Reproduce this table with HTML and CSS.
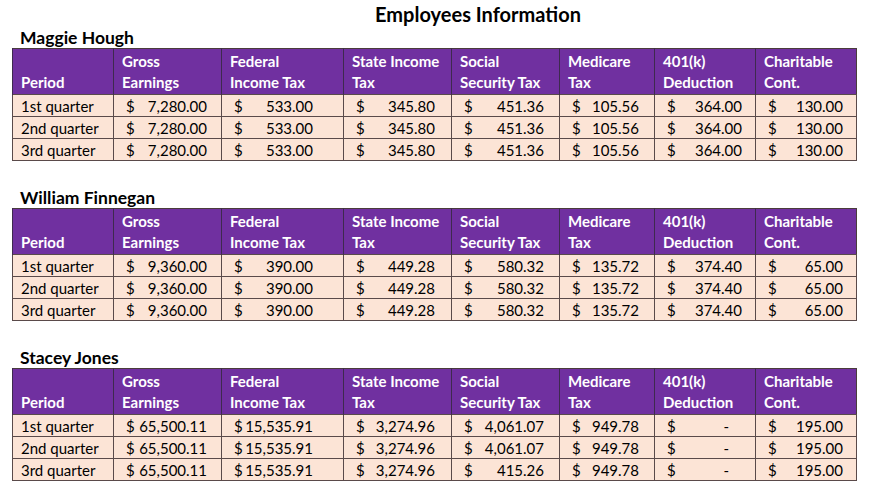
FILE: index.html
```html
<!DOCTYPE html>
<html>
<head>
<meta charset="utf-8">
<link rel="stylesheet" href="styles.css">
</head>
<body>
<div class="page">
  <h1 class="title">Employees Information</h1>

  <section class="emp">
    <h2 class="name">Maggie Hough</h2>
    <table class="grid">
      <colgroup>
        <col class="c1"><col class="c2"><col class="c3"><col class="c4"><col class="c5"><col class="c6"><col class="c7"><col class="c8">
      </colgroup>
      <thead>
        <tr><th>Period</th><th>Gross<br>Earnings</th><th>Federal<br>Income Tax</th><th>State Income<br>Tax</th><th>Social<br>Security Tax</th><th>Medicare<br>Tax</th><th>401(k)<br>Deduction</th><th>Charitable<br>Cont.</th></tr>
      </thead>
      <tbody>
        <tr><td class="per">1st quarter</td><td class="amt p-gross"><span>$</span><span>7,280.00</span></td><td class="amt p-fed"><span>$</span><span>533.00</span></td><td class="amt p-state"><span>$</span><span>345.80</span></td><td class="amt p-soc"><span>$</span><span>451.36</span></td><td class="amt p-med"><span>$</span><span>105.56</span></td><td class="amt p-401"><span>$</span><span>364.00</span></td><td class="amt p-char"><span>$</span><span>130.00</span></td></tr>
        <tr><td class="per">2nd quarter</td><td class="amt p-gross"><span>$</span><span>7,280.00</span></td><td class="amt p-fed"><span>$</span><span>533.00</span></td><td class="amt p-state"><span>$</span><span>345.80</span></td><td class="amt p-soc"><span>$</span><span>451.36</span></td><td class="amt p-med"><span>$</span><span>105.56</span></td><td class="amt p-401"><span>$</span><span>364.00</span></td><td class="amt p-char"><span>$</span><span>130.00</span></td></tr>
        <tr><td class="per">3rd quarter</td><td class="amt p-gross"><span>$</span><span>7,280.00</span></td><td class="amt p-fed"><span>$</span><span>533.00</span></td><td class="amt p-state"><span>$</span><span>345.80</span></td><td class="amt p-soc"><span>$</span><span>451.36</span></td><td class="amt p-med"><span>$</span><span>105.56</span></td><td class="amt p-401"><span>$</span><span>364.00</span></td><td class="amt p-char"><span>$</span><span>130.00</span></td></tr>
      </tbody>
    </table>
  </section>

  <section class="emp">
    <h2 class="name">William Finnegan</h2>
    <table class="grid">
      <colgroup>
        <col class="c1"><col class="c2"><col class="c3"><col class="c4"><col class="c5"><col class="c6"><col class="c7"><col class="c8">
      </colgroup>
      <thead>
        <tr><th>Period</th><th>Gross<br>Earnings</th><th>Federal<br>Income Tax</th><th>State Income<br>Tax</th><th>Social<br>Security Tax</th><th>Medicare<br>Tax</th><th>401(k)<br>Deduction</th><th>Charitable<br>Cont.</th></tr>
      </thead>
      <tbody>
        <tr><td class="per">1st quarter</td><td class="amt p-gross"><span>$</span><span>9,360.00</span></td><td class="amt p-fed"><span>$</span><span>390.00</span></td><td class="amt p-state"><span>$</span><span>449.28</span></td><td class="amt p-soc"><span>$</span><span>580.32</span></td><td class="amt p-med"><span>$</span><span>135.72</span></td><td class="amt p-401"><span>$</span><span>374.40</span></td><td class="amt p-char"><span>$</span><span>65.00</span></td></tr>
        <tr><td class="per">2nd quarter</td><td class="amt p-gross"><span>$</span><span>9,360.00</span></td><td class="amt p-fed"><span>$</span><span>390.00</span></td><td class="amt p-state"><span>$</span><span>449.28</span></td><td class="amt p-soc"><span>$</span><span>580.32</span></td><td class="amt p-med"><span>$</span><span>135.72</span></td><td class="amt p-401"><span>$</span><span>374.40</span></td><td class="amt p-char"><span>$</span><span>65.00</span></td></tr>
        <tr><td class="per">3rd quarter</td><td class="amt p-gross"><span>$</span><span>9,360.00</span></td><td class="amt p-fed"><span>$</span><span>390.00</span></td><td class="amt p-state"><span>$</span><span>449.28</span></td><td class="amt p-soc"><span>$</span><span>580.32</span></td><td class="amt p-med"><span>$</span><span>135.72</span></td><td class="amt p-401"><span>$</span><span>374.40</span></td><td class="amt p-char"><span>$</span><span>65.00</span></td></tr>
      </tbody>
    </table>
  </section>

  <section class="emp">
    <h2 class="name">Stacey Jones</h2>
    <table class="grid">
      <colgroup>
        <col class="c1"><col class="c2"><col class="c3"><col class="c4"><col class="c5"><col class="c6"><col class="c7"><col class="c8">
      </colgroup>
      <thead>
        <tr><th>Period</th><th>Gross<br>Earnings</th><th>Federal<br>Income Tax</th><th>State Income<br>Tax</th><th>Social<br>Security Tax</th><th>Medicare<br>Tax</th><th>401(k)<br>Deduction</th><th>Charitable<br>Cont.</th></tr>
      </thead>
      <tbody>
        <tr><td class="per">1st quarter</td><td class="amt p-gross"><span>$</span><span>65,500.11</span></td><td class="amt p-fed"><span>$</span><span>15,535.91</span></td><td class="amt p-state"><span>$</span><span>3,274.96</span></td><td class="amt p-soc"><span>$</span><span>4,061.07</span></td><td class="amt p-med"><span>$</span><span>949.78</span></td><td class="amt p-401 dash"><span>$</span><span>-</span></td><td class="amt p-char"><span>$</span><span>195.00</span></td></tr>
        <tr><td class="per">2nd quarter</td><td class="amt p-gross"><span>$</span><span>65,500.11</span></td><td class="amt p-fed"><span>$</span><span>15,535.91</span></td><td class="amt p-state"><span>$</span><span>3,274.96</span></td><td class="amt p-soc"><span>$</span><span>4,061.07</span></td><td class="amt p-med"><span>$</span><span>949.78</span></td><td class="amt p-401 dash"><span>$</span><span>-</span></td><td class="amt p-char"><span>$</span><span>195.00</span></td></tr>
        <tr><td class="per">3rd quarter</td><td class="amt p-gross"><span>$</span><span>65,500.11</span></td><td class="amt p-fed"><span>$</span><span>15,535.91</span></td><td class="amt p-state"><span>$</span><span>3,274.96</span></td><td class="amt p-soc"><span>$</span><span>415.26</span></td><td class="amt p-med"><span>$</span><span>949.78</span></td><td class="amt p-401 dash"><span>$</span><span>-</span></td><td class="amt p-char"><span>$</span><span>195.00</span></td></tr>
      </tbody>
    </table>
  </section>
</div>
</body>
</html>
```

FILE: styles.css
```css
* { box-sizing: border-box; }

html, body {
  margin: 0;
  padding: 0;
  background: #ffffff;
}

body {
  font-family: Lato, "Liberation Sans", sans-serif;
  color: #000000;
}

.page {
  width: 876px;
  padding: 0 0 0 12px;
}

.title {
  margin: 0;
  width: 844px;
  padding: 3px 0 0 88px;
  height: 28px;
  font-size: 20px;
  font-weight: 700;
  line-height: 22px;
  text-align: center;
}

.emp {
  height: 160px;
}

.emp:first-of-type {
  height: auto;
}

.name {
  margin: 0;
  padding: 0 0 0 8px;
  height: 20px;
  font-size: 17.5px;
  font-weight: 700;
  line-height: 20px;
}

.emp + .emp .name {
  padding-top: 27px;
  height: 47px;
}

.grid {
  border-collapse: collapse;
  table-layout: fixed;
  width: 844px;
  font-size: 15px;
  border: 1px solid #4a3c3c;
}

.c1 { width: 101px; }
.c2 { width: 108px; }
.c3 { width: 122px; }
.c4 { width: 108px; }
.c5 { width: 108px; }
.c6 { width: 95px; }
.c7 { width: 101px; }
.c8 { width: 101px; }

.grid th {
  background: #7030a0;
  color: #ffffff;
  font-weight: 700;
  font-size: 15px;
  line-height: 21px;
  text-align: left;
  vertical-align: bottom;
  padding: 0 0 1px 8px;
  height: 46px;
  border-left: 1px solid #3e2a4e;
  white-space: nowrap;
}

.grid td {
  background: #fce4d6;
  height: 22px;
  padding: 0;
  line-height: 20px;
  border: 1px solid #5a4a4a;
  white-space: nowrap;
}

.grid td.per {
  padding-left: 8px;
}

.amt {
  padding-left: 12px !important;
}

.amt span:first-child {
  float: left;
}

.amt span:last-child {
  float: right;
}

.p-gross { padding-right: 14px !important; }
.p-fed { padding-right: 30px !important; }
.p-state { padding-right: 16px !important; }
.p-soc { padding-right: 15px !important; }
.p-med { padding-right: 15px !important; }
.p-401 { padding-right: 13px !important; }
.p-char { padding-right: 13px !important; }
.p-401.dash { padding-right: 26px !important; }
```
